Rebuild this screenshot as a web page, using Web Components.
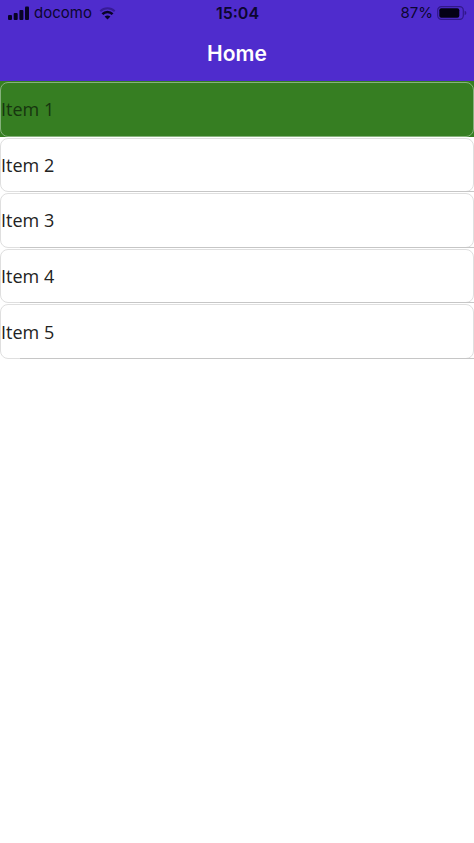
<!DOCTYPE html>
<html lang="en">
<head>
<meta charset="utf-8">
<meta name="viewport" content="width=device-width, initial-scale=1">
<title>Home</title>
<style>
  body { margin: 0; background: #fff; font-family: "Open Sans", "Noto Sans", sans-serif; color: #222; }
</style>
</head>
<body>
<app-page>
  <status-bar slot="top" carrier="docomo" time="15:04" battery="87%"></status-bar>
  <nav-bar slot="top">Home</nav-bar>
  <item-list>
    <list-item selected>Item 1</list-item>
    <list-item>Item 2</list-item>
    <list-item>Item 3</list-item>
    <list-item>Item 4</list-item>
    <list-item>Item 5</list-item>
  </item-list>
</app-page>
<script>
class BaseElement extends HTMLElement {
  constructor() {
    super();
    this.attachShadow({ mode: "open" }).innerHTML = this.constructor.markup;
  }
}

class AppPage extends BaseElement {
  static markup = `
    <style>
      :host { display: flex; flex-direction: column; min-height: 100vh; }
      header { background: #4f2ccd; }
    </style>
    <header><slot name="top"></slot></header>
    <main><slot></slot></main>`;
}

class StatusBar extends BaseElement {
  static markup = `
    <style>
      :host { display: grid; grid-template-columns: 1fr auto 1fr; align-items: center; height: 26px;
        padding: 0 7px 0 8px; color: #0c0630; font: 15px/26px Inter, "Liberation Sans", sans-serif; }
      div { display: flex; align-items: center; }
      .end { justify-content: flex-end; gap: 4px; }
      .carrier { margin: 0 7px 0 5px; }
      .time { font-weight: 600; font-size: 16px; }
      svg { display: block; flex: none; }
    </style>
    <div>
      <svg width="21" height="14" viewBox="0 0 21 14" fill="#080326" aria-hidden="true">
        <rect x="0" y="9" width="4" height="5" rx="1"/><rect x="5.7" y="7" width="4" height="7" rx="1"/>
        <rect x="11.4" y="4" width="4" height="10" rx="1"/><rect x="17" y="0.5" width="4" height="13.5" rx="1"/>
      </svg>
      <span class="carrier"></span>
      <svg width="17" height="14" viewBox="0 0 17 14" fill="none" aria-hidden="true">
        <path d="M1.3 5.2C5.4 1.2 11.6 1.2 15.7 5.2" stroke="#371b96" stroke-width="2"/>
        <path d="M3.4 8.2C6.3 5.2 10.7 5.2 13.6 8.2" stroke="#080326" stroke-width="2.5"/>
        <path d="M5.6 10.6Q8.5 8.2 11.4 10.6L8.5 13.6Z" fill="#080326"/>
      </svg>
    </div>
    <div class="time"></div>
    <div class="end">
      <span class="battery"></span>
      <svg width="30" height="14" viewBox="0 0 30 14" aria-hidden="true">
        <rect x="0.7" y="0.7" width="25.6" height="12.6" rx="3.6" fill="none" stroke="#31188a" stroke-width="1.2"/>
        <rect x="2.3" y="2.3" width="20" height="9.4" rx="2" fill="#040114"/>
        <path d="M27.6 4.8Q29.4 5.4 29.4 7T27.6 9.2Z" fill="#31188a"/>
      </svg>
    </div>`;
  connectedCallback() {
    for (const name of ["carrier", "time", "battery"])
      this.shadowRoot.querySelector("." + name).textContent = this.getAttribute(name);
  }
}

class NavBar extends BaseElement {
  static markup = `
    <style>
      :host { display: block; }
      h1 { margin: 0; color: #fff; text-align: center; font: 600 21px/55px Inter, "Liberation Sans", sans-serif; }
    </style>
    <h1><slot></slot></h1>`;
}

class ItemList extends BaseElement {
  static markup = `
    <style>
      :host { display: grid; grid-auto-rows: 1fr; min-height: 278px; }
    </style>
    <slot></slot>`;
  connectedCallback() { this.setAttribute("role", "list"); }
}

class ListItem extends BaseElement {
  static markup = `
    <style>
      :host { display: grid; box-sizing: border-box; padding-top: 1px; font-size: 18px; line-height: 24px; }
      .card, .rule { grid-area: 1 / 1; }
      .card { display: flex; align-items: center; box-sizing: border-box; border: 1px solid #dfdfdf; border-radius: 8px; }
      .rule { align-self: end; height: 1px; margin-left: 20px; background: #c6c6c6; }
      :host([selected]) { background: #367e22; }
      :host([selected]) .card { border-color: #86b17b; color: #17350f; }
      :host([selected]) .rule { background: none; }
    </style>
    <div class="card"><span><slot></slot></span></div>
    <div class="rule"></div>`;
  connectedCallback() { this.setAttribute("role", "listitem"); }
}

customElements.define("app-page", AppPage);
customElements.define("status-bar", StatusBar);
customElements.define("nav-bar", NavBar);
customElements.define("item-list", ItemList);
customElements.define("list-item", ListItem);
</script>
</body>
</html>
